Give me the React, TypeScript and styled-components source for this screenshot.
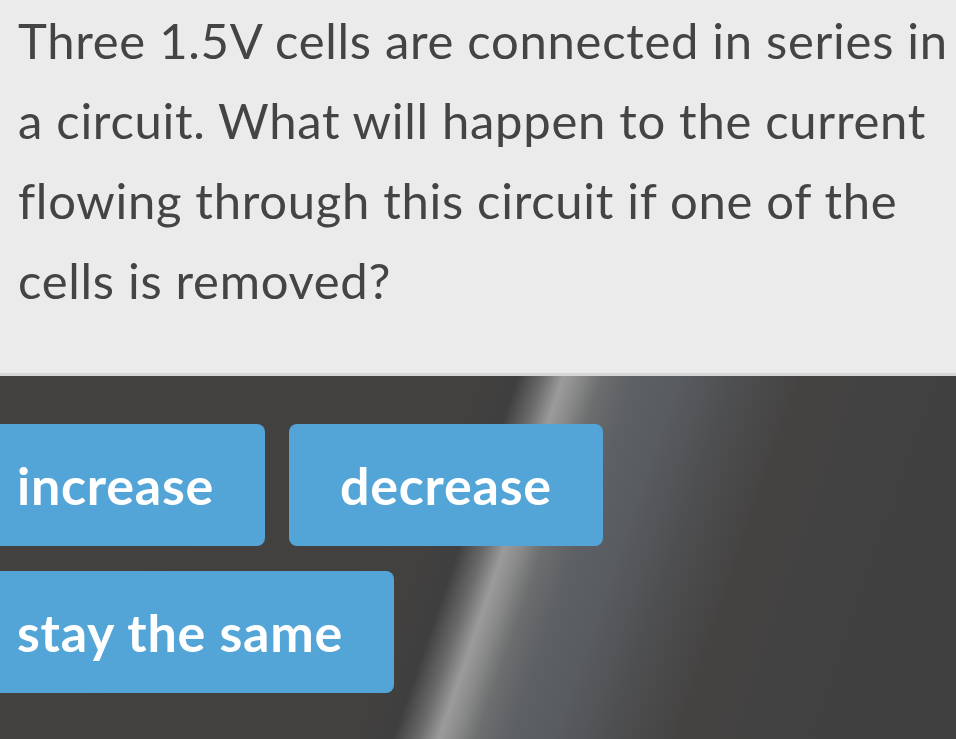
import styled, { createGlobalStyle } from "styled-components";

const GlobalStyle = createGlobalStyle`
  html, body {
    margin: 0;
    padding: 0;
    overflow: hidden;
    background: #424140;
  }
  * { box-sizing: border-box; }
`;

const Page = styled.div`
  display: flex;
  flex-direction: column;
  min-height: 100vh;
  margin-left: -34px;
  width: calc(100% + 34px);
  font-family: "Lato", "Noto Sans", sans-serif;
`;

const QuestionPanel = styled.section`
  background: #ebebeb;
  border-bottom: 3px solid #d6d6d6;
  padding: 0 20px 53px 52px;
`;

const QuestionText = styled.p`
  margin: 0;
  font-size: 49px;
  letter-spacing: 0.7px;
  line-height: 80px;
  color: #444444;
  white-space: nowrap;
`;

const AnswerArea = styled.section`
  flex: 1;
  padding: 48px 0 40px;
  background: linear-gradient(
    109deg,
    #434241 0%,
    #434140 46%,
    #3f3f3f 49.5%,
    #6a6b6a 51.8%,
    #9a9b9a 53.6%,
    #8a8b8a 55%,
    #6c6e6f 57%,
    #5d6064 60%,
    #585b5f 64%,
    #4e4f51 69%,
    #454342 75%,
    #414141 86%,
    #404040 100%
  );
`;

const AnswerList = styled.div`
  display: flex;
  flex-wrap: wrap;
  gap: 25px 24px;
  max-width: 680px;
`;

const AnswerButton = styled.button`
  height: 122px;
  padding: 0 51px;
  border: none;
  border-radius: 8px;
  background: #52a5d6;
  color: #ffffff;
  font-family: "Lato", "Noto Sans", sans-serif;
  font-weight: 700;
  font-size: 52px;
  letter-spacing: 0.75px;
  cursor: pointer;
`;

const answers = ["increase", "decrease", "stay the same"];

function App() {
  return (
    <>
      <GlobalStyle />
      <Page>
        <QuestionPanel>
          <QuestionText>
            Three 1.5V cells are connected in series in
            <br />
            a circuit. What will happen to the current
            <br />
            flowing through this circuit if one of the
            <br />
            cells is removed?
          </QuestionText>
        </QuestionPanel>
        <AnswerArea>
          <AnswerList>
            {answers.map((a) => (
              <AnswerButton key={a}>{a}</AnswerButton>
            ))}
          </AnswerList>
        </AnswerArea>
      </Page>
    </>
  );
}

export default App;
